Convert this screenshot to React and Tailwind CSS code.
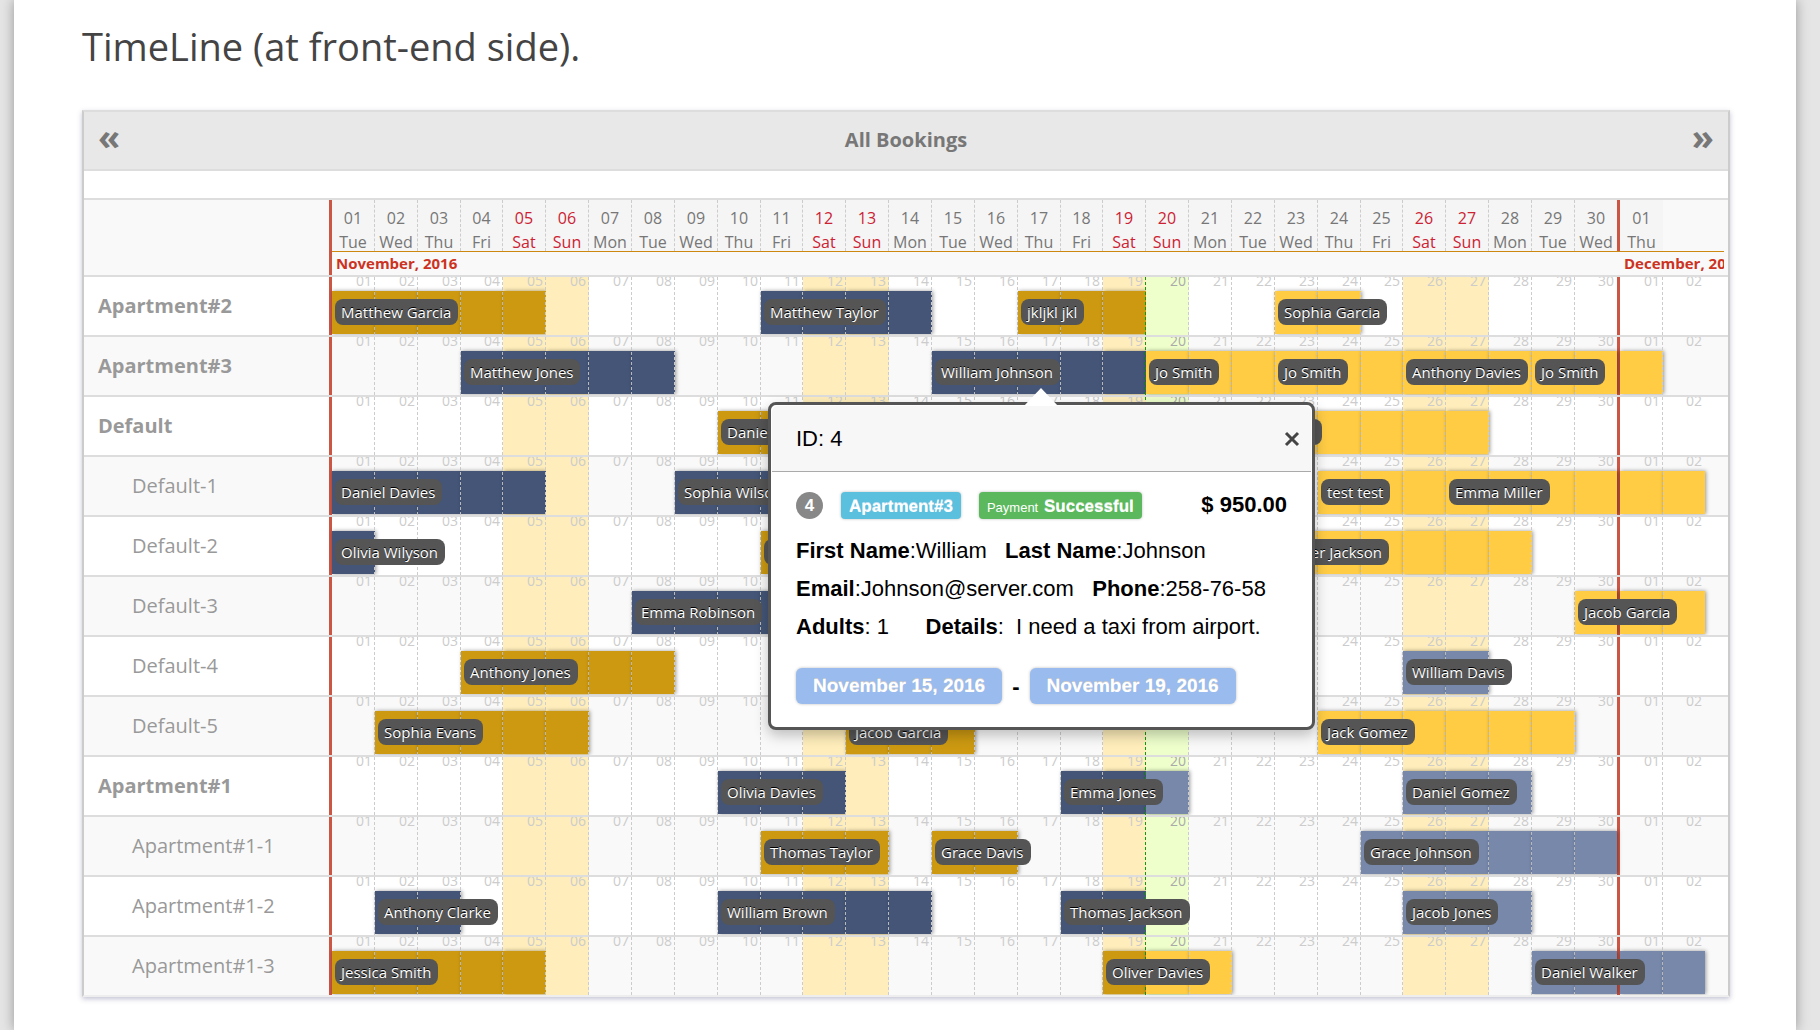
import { Fragment } from "react";
import clsx from "clsx";

const TODAY = 20;
const WEEKDAYS = ["Mon", "Tue", "Wed", "Thu", "Fri", "Sat", "Sun"];

// Nov 1 .. Dec 2, numbered through so a booking can cross the month border
const days = Array.from({ length: 32 }, (_, i) => {
  const n = i + 1;
  const weekday = WEEKDAYS[n % 7];
  return {
    n,
    label: String(n > 30 ? n - 30 : n).padStart(2, "0"),
    weekday,
    weekend: weekday === "Sat" || weekday === "Sun",
  };
});

const resources = [
  { title: "Apartment#2", bookings: [["Matthew Garcia", 1, 5, "gold"], ["Matthew Taylor", 11, 14, "blue"], ["jkljkl jkl", 17, 19, "gold"], ["Sophia Garcia", 23, 24, "gold"]] },
  { title: "Apartment#3", bookings: [["Matthew Jones", 4, 8, "blue"], ["William Johnson", 15, 19, "blue"], ["Jo Smith", 20, 22, "gold"], ["Jo Smith", 23, 25, "gold"], ["Anthony Davies", 26, 28, "gold"], ["Jo Smith", 29, 31, "gold"]] },
  { title: "Default", bookings: [["Daniel Evans", 10, 13, "gold"], ["Sophia Robinson", 21, 27, "gold"]] },
  { title: "Default-1", child: true, bookings: [["Daniel Davies", 1, 5, "blue"], ["Sophia Wilson", 9, 12, "blue"], ["test test", 24, 26, "gold"], ["Emma Miller", 27, 32, "gold"]] },
  { title: "Default-2", child: true, bookings: [["Olivia Wilyson", 1, 1, "blue"], ["Emma Brown", 11, 14, "gold"], ["Oliver Jackson", 23, 28, "gold"]] },
  { title: "Default-3", child: true, bookings: [["Emma Robinson", 8, 11, "blue"], ["Jacob Garcia", 30, 32, "gold"]] },
  { title: "Default-4", child: true, bookings: [["Anthony Jones", 4, 8, "gold"], ["William Davis", 26, 27, "blue"]] },
  { title: "Default-5", child: true, bookings: [["Sophia Evans", 2, 6, "gold"], ["Jacob Garcia", 13, 15, "gold"], ["Jack Gomez", 24, 29, "gold"]] },
  { title: "Apartment#1", bookings: [["Olivia Davies", 10, 12, "blue"], ["Emma Jones", 18, 20, "blue"], ["Daniel Gomez", 26, 28, "blue"]] },
  { title: "Apartment#1-1", child: true, bookings: [["Thomas Taylor", 11, 13, "gold"], ["Grace Davis", 15, 16, "gold"], ["Grace Johnson", 25, 30, "blue"]] },
  { title: "Apartment#1-2", child: true, bookings: [["Anthony Clarke", 2, 3, "blue"], ["William Brown", 10, 14, "blue"], ["Thomas Jackson", 18, 19, "blue"], ["Jacob Jones", 26, 28, "blue"]] },
  { title: "Apartment#1-3", child: true, bookings: [["Jessica Smith", 1, 5, "gold"], ["Oliver Davies", 19, 21, "gold"], ["Daniel Walker", 29, 32, "blue"]] },
];

// Past days get the darker shade
const barColor = (kind, n) => {
  if (kind === "gold") return n < TODAY ? "bg-[#cc9911]" : "bg-[#ffcc44]";
  return n < TODAY ? "bg-[#445577]" : "bg-[#7788aa]";
};

const cellWidth = (day) =>
  day.weekday === "Fri" || day.n === 30 || day.n === 32 ? "w-[42px]" : "w-[43px]";

const MonthLine = () => <div className="w-[3px] shrink-0 bg-[#cc5544]" />;

const HeaderDay = ({ day }) => (
  <div
    className={clsx(
      "shrink-0 bg-[#f5f5f5] pt-[6px] text-center text-[16px] leading-6",
      cellWidth(day),
      day.weekend ? "text-[#cc2233]" : "text-[#777]",
      day.n < 30 && "border-r border-dashed border-[#ccc]"
    )}
  >
    <div>{day.label}</div>
    <div className="-mx-2">{day.weekday}</div>
  </div>
);

const DayCell = ({ day, booking }) => (
  <div
    className={clsx(
      "relative h-[58px] shrink-0",
      cellWidth(day),
      day.n === TODAY ? "bg-[#eeffcc]" : day.weekend && "bg-[#ffeebb]"
    )}
  >
    <span
      className={clsx(
        "absolute inset-x-0 -top-[6px] pr-[3px] text-right text-[14px] leading-5",
        day.n === TODAY ? "text-[#aaa]" : "text-[#ccc]"
      )}
    >
      {day.label}
    </span>
    {booking && (
      <div
        className={clsx(
          "absolute inset-x-0 top-[14px] h-[43px] shadow-[1px_0_4px_rgba(0,0,0,0.4)]",
          barColor(booking[3], day.n)
        )}
      />
    )}
    {day.n !== 30 && day.n !== 32 && (
      <div
        className={clsx(
          "absolute inset-0 border-r border-dashed",
          day.n === TODAY - 1 ? "border-[#119911]" : "border-[#ccc]"
        )}
      />
    )}
    {booking && booking[1] === day.n && (
      <a
        href="#booking"
        className="absolute left-[3px] top-[22px] z-10 h-[26px] whitespace-nowrap rounded-lg bg-[#555] pl-[6px] pr-[7px] text-[15px] leading-[26px] text-white [text-shadow:0_-1px_0_#000]"
      >
        {booking[0]}
      </a>
    )}
  </div>
);

const BookingPopover = () => (
  <div
    role="dialog"
    aria-label="Booking 4"
    className="absolute left-[684px] top-[290px] z-30 w-[547px] rounded-lg border-[3px] border-[#555] bg-white p-px font-['Liberation_Sans',sans-serif] text-[22px] text-black shadow-[0_5px_14px_rgba(0,0,0,0.25)]"
  >
    <svg className="absolute -top-[17px] left-[253px]" width="34" height="18" viewBox="0 0 34 18">
      <path d="M0 18L17 0L34 18Z" fill="#fff" />
    </svg>
    <div className="flex h-[66px] items-center justify-between rounded-t-md border-b border-[#aaa] bg-[#f7f7f7] pl-6 pr-[11px]">
      <h2>ID: 4</h2>
      <button type="button" aria-label="Close">
        <svg width="16" height="16" viewBox="0 0 16 16">
          <path d="M2 2L14 14M14 2L2 14" stroke="#444" strokeWidth="3" />
        </svg>
      </button>
    </div>
    <div className="px-6 pb-[22px] pt-5">
      <div className="flex h-[27px] items-center font-bold text-white">
        <span className="flex h-[27px] w-[27px] items-center justify-center rounded-full bg-[#888] text-[17px]">4</span>
        <span className="ml-[18px] h-[27px] rounded-sm bg-[#5bc0de] px-2 text-[17px] leading-[29px] shadow-[0_0_3px_#bbb] [text-shadow:0_-1px_0_#bde]">
          Apartment#3
        </span>
        <span className="ml-[18px] h-[27px] rounded-sm bg-[#5cb85c] px-2 text-[17px] leading-[29px] shadow-[0_0_3px_#bbb]">
          <span className="mr-px text-[13px] font-normal">Payment</span>{" "}
          <span className="[text-shadow:0_-1px_0_#bdb]">Successful</span>
        </span>
        <span className="ml-auto pb-[2px] text-black">$ 950.00</span>
      </div>
      <div className="mt-[13px] whitespace-pre leading-[38px]">
        <p><b>First Name</b>:William   <b>Last Name</b>:Johnson</p>
        <p><b>Email</b>:Johnson@server.com   <b>Phone</b>:258-76-58</p>
        <p><b>Adults</b>: 1      <b>Details</b>:  I need a taxi from airport.</p>
      </div>
      <div className="mt-[22px] flex h-[36px] items-center font-bold">
        <span className="h-[36px] rounded-md bg-[#99bbee] px-[17px] text-[19px] leading-[36px] text-white shadow-[0_0_3px_#bbb] [text-shadow:0_-1px_0_#ccc]">
          November 15, 2016
        </span>
        <span className="mx-[10px]">-</span>
        <span className="h-[36px] rounded-md bg-[#99bbee] px-[17px] text-[19px] leading-[36px] text-white shadow-[0_0_3px_#bbb] [text-shadow:0_-1px_0_#ccc]">
          November 19, 2016
        </span>
      </div>
    </div>
  </div>
);

const App = () => {
  return (
    <div className="min-h-screen overflow-hidden bg-[#e5e5e5] pl-[14px] pr-6 font-['Open_Sans',sans-serif]">
      <main className="min-h-screen bg-white pb-8 pl-[68px] pr-[66px] pt-5 shadow-[0_0_12px_rgba(0,0,0,0.35)]">
        <h1 className="text-[38px] leading-[52px] text-[#444]">TimeLine (at front-end side).</h1>

        <section className="relative mt-[38px] border-2 border-[#ccc] border-b-[#eee] border-t-[#ddd] shadow-[0_2px_5px_rgba(60,60,120,0.3)]">
          <header className="flex h-[59px] items-center justify-between border-b-2 border-[#ddd] bg-[#e8e8e8] px-[14px] font-bold text-[#777]">
            <button type="button" aria-label="Previous" className="pb-2 text-[36px] leading-10">«</button>
            <h2 className="pb-px text-[20px]">All Bookings</h2>
            <button type="button" aria-label="Next" className="pb-2 text-[36px] leading-10">»</button>
          </header>
          <div className="h-[29px] border-b-2 border-[#ddd]" />

          <div className="overflow-hidden">
            <div className="flex h-[77px] border-b-2 border-[#ddd] bg-[#f9f9f9]">
              <div className="w-[245px] shrink-0" />
              <MonthLine />
              <div className="min-w-0 grow">
                <div className="mr-1 flex h-[52px] border-b border-[#cc8811]">
                  {days.slice(0, 31).map((day) => (
                    <Fragment key={day.n}>
                      {day.n === 31 && <MonthLine />}
                      <HeaderDay day={day} />
                    </Fragment>
                  ))}
                </div>
                <div className="mr-1 flex overflow-hidden whitespace-nowrap text-[15px] font-bold leading-[22px] text-[#cc3322]">
                  <div className="w-[1288px] shrink-0 pl-1">November, 2016</div>
                  <div className="min-w-0 overflow-hidden pl-1">December, 2016</div>
                </div>
              </div>
            </div>

            {resources.map((resource, i) => (
              <div
                key={resource.title}
                className={clsx(
                  "flex h-[60px] overflow-hidden last:h-[58px]",
                  i % 2 ? "bg-[#f9f9f9]" : "bg-white",
                  i < resources.length - 1 && "border-b-2 border-[#ddd]"
                )}
              >
                <div
                  className={clsx(
                    "w-[245px] shrink-0 text-[20px] leading-[57px] text-[#999]",
                    resource.child ? "pl-12" : "pl-[14px] font-bold"
                  )}
                >
                  {resource.title}
                </div>
                <MonthLine />
                {days.map((day) => (
                  <Fragment key={day.n}>
                    {day.n === 31 && <MonthLine />}
                    <DayCell
                      day={day}
                      booking={resource.bookings.find((b) => day.n >= b[1] && day.n <= b[2])}
                    />
                  </Fragment>
                ))}
              </div>
            ))}
          </div>

          <BookingPopover />
        </section>
      </main>
    </div>
  );
};

export default App;
